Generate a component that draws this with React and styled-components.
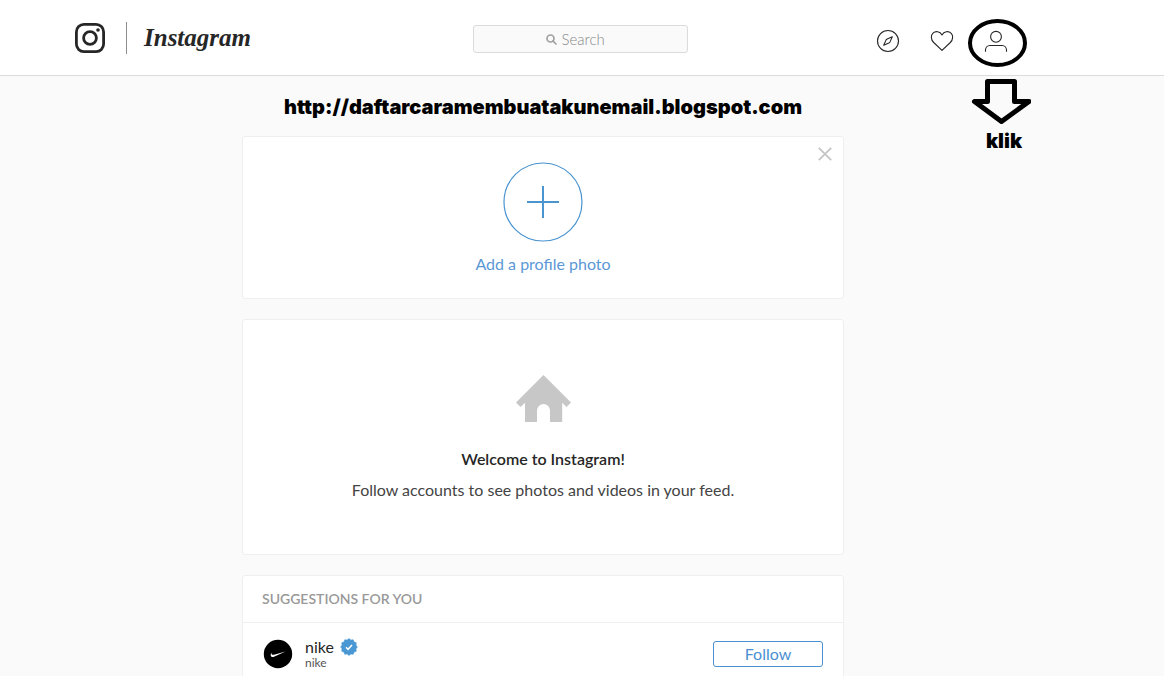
import styled, { createGlobalStyle } from "styled-components";

const suggestions = [{ username: "nike", fullName: "nike", verified: true }];

export default function App() {
  return (
    <>
      <GlobalStyle />
      <Header>
        <HeaderInner>
          <Brand href="#home" aria-label="Instagram">
            <GlyphLogo />
            <Wordmark>Instagram</Wordmark>
          </Brand>

          <SearchBox>
            <SearchIcon />
            <SearchInput type="text" placeholder="Search" aria-label="Search" />
          </SearchBox>

          <Nav>
            <NavLink href="#explore" aria-label="Explore">
              <CompassIcon />
            </NavLink>
            <NavLink href="#activity" aria-label="Activity">
              <HeartIcon />
            </NavLink>
            <NavLink href="#profile" aria-label="Profile">
              <PersonIcon />
              <Pointer>
                <PointerMark />
                <Caption>klik</Caption>
              </Pointer>
            </NavLink>
          </Nav>
        </HeaderInner>
      </Header>

      <Main>
        <Banner>http://daftarcaramembuatakunemail.blogspot.com</Banner>

        <Feed>
          {/* ---------- PROFILE PHOTO ---------- */}
          <PhotoCard>
            <CloseButton type="button" aria-label="Close">
              <CloseIcon />
            </CloseButton>
            <AddPhoto type="button">
              <PlusIcon />
              Add a profile photo
            </AddPhoto>
          </PhotoCard>

          {/* ---------- WELCOME ---------- */}
          <WelcomeCard>
            <HouseIcon />
            <h2>Welcome to Instagram!</h2>
            <p>Follow accounts to see photos and videos in your feed.</p>
          </WelcomeCard>

          {/* ---------- SUGGESTIONS ---------- */}
          <Card>
            <CardTitle>Suggestions for you</CardTitle>
            {suggestions.map((user) => (
              <UserRow key={user.username}>
                <Avatar />
                <UserInfo>
                  <Username href={`#${user.username}`}>
                    {user.username}
                    {user.verified && <VerifiedBadge />}
                  </Username>
                  <FullName>{user.fullName}</FullName>
                </UserInfo>
                <FollowButton type="button">Follow</FollowButton>
              </UserRow>
            ))}
          </Card>
        </Feed>
      </Main>
    </>
  );
}

function GlyphLogo() {
  return (
    <svg width="30" height="30" viewBox="0 0 30 30" fill="none" stroke="#262626" strokeWidth="2.8" aria-hidden="true">
      <rect x="1.4" y="1.4" width="27.2" height="27.2" rx="7.5" />
      <circle cx="15" cy="15" r="6.4" />
      <circle cx="23" cy="7" r="1.8" fill="#262626" stroke="none" />
    </svg>
  );
}

function SearchIcon() {
  return (
    <svg width="11" height="11" viewBox="0 0 11 11" fill="none" stroke="#a0a0a0" strokeWidth="1.7" aria-hidden="true">
      <circle cx="4.5" cy="4.5" r="3.5" />
      <path d="M7 7l3 3" strokeLinecap="round" />
    </svg>
  );
}

function CompassIcon() {
  return (
    <svg width="24" height="24" viewBox="0 0 24 24" fill="none" stroke="#262626" strokeWidth="1.1" aria-hidden="true">
      <circle cx="12" cy="12" r="10.5" />
      <path d="M16.3 7.7l-2.3 5.2c-.3.6-.6.9-1.2 1.2l-5.1 2.2 2.3-5.2c.3-.6.6-.9 1.2-1.2z" strokeLinejoin="round" />
    </svg>
  );
}

function HeartIcon() {
  return (
    <svg width="24" height="24" viewBox="0 0 24 24" fill="none" stroke="#262626" strokeWidth="1.1" aria-hidden="true">
      <path
        d="M12 21.3l-8.3-7.8C.8 10.6.6 6.5 3 4.200c2.600-2.500 7-1.900 9 1.700 2-3.600 6.400-4.200 9-1.700 2.400 2.300 2.200 6.400-.7 9.300z"
        strokeLinejoin="round"
      />
    </svg>
  );
}

function PersonIcon() {
  return (
    <svg width="24" height="24" viewBox="0 0 24 24" fill="none" stroke="#262626" strokeWidth="1.1" aria-hidden="true">
      <circle cx="12" cy="7.8" r="5.4" />
      <path d="M1.5 22.8v-1.6c0-2.6 1.8-4.7 4.4-4.7h12.2c2.6 0 4.4 2.1 4.4 4.7v1.6" />
    </svg>
  );
}

function PointerMark() {
  return (
    <svg width="64" height="106" viewBox="0 0 64 106" fill="none" stroke="#000" aria-hidden="true">
      <ellipse cx="30.5" cy="24" rx="27.5" ry="22" strokeWidth="4" />
      <path d="M20.5 62.5h27v20h14.5L34.5 102.5 7.5 82.5h13z" strokeWidth="5" strokeLinejoin="round" />
    </svg>
  );
}

function CloseIcon() {
  return (
    <svg width="14" height="14" viewBox="0 0 14 14" stroke="#c4c4c4" strokeWidth="1.8" aria-hidden="true">
      <path d="M.8.8l12.4 12.4M13.2.8L.8 13.2" />
    </svg>
  );
}

function PlusIcon() {
  return (
    <svg width="80" height="80" viewBox="0 0 80 80" fill="none" stroke="#4a94d0" aria-hidden="true">
      <circle cx="40" cy="40" r="39" strokeWidth="1.2" />
      <path d="M24 40h32M40 24v32" strokeWidth="2" />
    </svg>
  );
}

function HouseIcon() {
  return (
    <svg width="55" height="47" viewBox="0 0 55 47" fill="#c7c7c7" aria-hidden="true">
      <path d="M27.5 0L55 27.5l-4.5 4.5-4.3-4.3V47H34V35.5a6.5 6.5 0 0 0-13 0V47H9V27.7L4.5 32 0 27.5z" />
    </svg>
  );
}

function VerifiedBadge() {
  const points = Array.from({ length: 24 }, (_, i) => {
    const radius = i % 2 ? 7.2 : 8.4;
    const angle = (i * Math.PI) / 12;
    return `${9 + radius * Math.sin(angle)},${9 - radius * Math.cos(angle)}`;
  }).join(" ");

  return (
    <svg width="18" height="18" viewBox="0 0 18 18" role="img" aria-label="Verified">
      <polygon points={points} fill="#4a98d3" stroke="#4a98d3" strokeWidth=".6" strokeLinejoin="round" />
      <path d="M6 9.3l2 2 4-4.3" fill="none" stroke="#fff" strokeWidth="1.5" />
    </svg>
  );
}

function Avatar() {
  return (
    <svg width="30" height="30" viewBox="0 0 30 30" aria-hidden="true">
      <circle cx="15" cy="15" r="14.2" fill="#000" />
      <path d="M22.5 12.5L11 17.7c-2.6 1.1-4.4-.9-2.5-4.2-.4 1.9.6 2.7 2.6 2.2z" fill="#fff" />
    </svg>
  );
}

const GlobalStyle = createGlobalStyle`
  * {
    box-sizing: border-box;
  }

  html {
    scrollbar-width: none;
  }

  body {
    margin: 0;
    background-color: #fafafa;
    color: #262626;
    font-family: Lato, "Open Sans", sans-serif;
    font-size: 16px;
    line-height: 20px;
  }

  h2, p {
    margin: 0;
  }

  a {
    color: inherit;
    text-decoration: none;
  }

  button, input {
    font: inherit;
  }

  svg {
    display: block;
    flex-shrink: 0;
  }
`;

const Header = styled.header`
  padding-right: 81px;
  background-color: #fff;
  border-bottom: 1px solid #dbdbdb;
`;

const HeaderInner = styled.div`
  display: grid;
  grid-template-columns: 398px 215px 1fr;
  align-items: center;
  max-width: 933px;
  height: 75px;
  margin: 0 auto;
`;

const Brand = styled.a`
  display: flex;
  align-items: center;
`;

const Wordmark = styled.span`
  margin-left: 21px;
  padding-left: 17px;
  border-left: 1px solid #8e8e8e;
  font-family: Billabong, "Liberation Serif", serif;
  font-size: 25px;
  font-style: italic;
  font-weight: 700;
  line-height: 32px;
`;

const SearchBox = styled.label`
  display: flex;
  align-items: center;
  justify-content: center;
  gap: 5px;
  height: 28px;
  margin-top: 3px;
  background-color: #fafafa;
  border: 1px solid #dbdbdb;
  border-radius: 3px;
`;

const SearchInput = styled.input`
  width: 54px;
  padding: 0;
  background: none;
  border: 0;
  outline: 0;
  font-size: 15px;
  font-weight: 300;

  &::placeholder {
    color: #888;
    opacity: 1;
  }
`;

const Nav = styled.nav`
  display: flex;
  justify-content: flex-end;
  gap: 30px;
  padding-top: 6px;
`;

const NavLink = styled.a`
  position: relative;
`;

const Pointer = styled.span`
  position: absolute;
  top: -10px;
  left: -17px;
  display: flex;
  flex-direction: column;
  align-items: center;
`;

const Caption = styled.span`
  padding-left: 10px;
  color: #000;
  font-family: Inter, "Liberation Sans", sans-serif;
  font-size: 20px;
  font-weight: 900;
  line-height: 32px;
`;

const Main = styled.main`
  padding-right: 78px;
`;

const Banner = styled.p`
  padding-top: 2px;
  color: #000;
  font-family: Inter, "Liberation Sans", sans-serif;
  font-size: 20px;
  font-weight: 900;
  line-height: 58px;
  text-align: center;
`;

const Feed = styled.div`
  display: flex;
  flex-direction: column;
  gap: 20px;
  max-width: 602px;
  margin: 0 auto;
`;

const Card = styled.section`
  background-color: #fff;
  border: 1px solid #efefef;
  border-radius: 3px;
`;

const PhotoCard = styled(Card)`
  position: relative;
  display: flex;
  justify-content: center;
  padding: 25px 20px 24px;
`;

const CloseButton = styled.button`
  position: absolute;
  top: 10px;
  right: 11px;
  padding: 0;
  background: none;
  border: 0;
  cursor: pointer;
`;

const AddPhoto = styled.button`
  display: flex;
  flex-direction: column;
  align-items: center;
  gap: 12px;
  padding: 0;
  background: none;
  border: 0;
  color: #5b98d6;
  cursor: pointer;
`;

const WelcomeCard = styled(Card)`
  display: flex;
  flex-direction: column;
  align-items: center;
  padding: 55px 20px 54px;
  text-align: center;

  h2 {
    margin: 27px 0 11px;
    font-size: 16px;
    font-weight: 600;
  }

  p {
    color: #444;
  }
`;

const CardTitle = styled.h2`
  padding: 13px 19px;
  border-bottom: 1px solid #efefef;
  color: #999;
  font-size: 14px;
  font-weight: 600;
  text-transform: uppercase;
`;

const UserRow = styled.div`
  display: flex;
  align-items: center;
  padding: 15px 20px;
`;

const UserInfo = styled.div`
  flex: 1;
  margin-left: 12px;
`;

const Username = styled.a`
  display: flex;
  align-items: center;
  gap: 6px;
  line-height: 18px;
`;

const FullName = styled.div`
  color: #555;
  font-size: 12px;
  line-height: 14px;
`;

const FollowButton = styled.button`
  width: 110px;
  height: 26px;
  padding: 0;
  background-color: #fff;
  border: 1px solid #4a90d2;
  border-radius: 3px;
  color: #4a90d2;
  line-height: 22px;
  cursor: pointer;
`;
